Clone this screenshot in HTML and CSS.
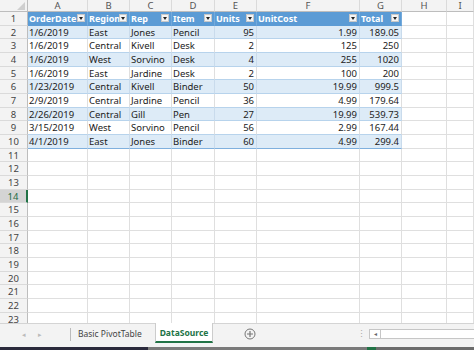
FILE: index.html
```html
<!DOCTYPE html>
<html>
<head>
<meta charset="utf-8">
<link rel="stylesheet" href="styles.css">
</head>
<body>
<div class="sheet">
  <div class="grid">
    <div class="corner"><span class="tri"></span></div>
    <div class="ch">A</div><div class="ch">B</div><div class="ch">C</div><div class="ch">D</div><div class="ch">E</div><div class="ch">F</div><div class="ch">G</div><div class="ch">H</div><div class="ch">I</div>

    <div class="rh">1</div>
    <div class="th"><span class="tt">OrderDate</span><span class="dd"></span></div>
    <div class="th"><span class="tt">Region</span><span class="dd"></span></div>
    <div class="th"><span class="tt">Rep</span><span class="dd"></span></div>
    <div class="th"><span class="tt">Item</span><span class="dd"></span></div>
    <div class="th"><span class="tt">Units</span><span class="dd"></span></div>
    <div class="th"><span class="tt">UnitCost</span><span class="dd"></span></div>
    <div class="th"><span class="tt">Total</span><span class="dd"></span></div>
    <div class="c"></div><div class="c"></div>

    <div class="rh">2</div><div class="c b">1/6/2019</div><div class="c b">East</div><div class="c b">Jones</div><div class="c b">Pencil</div><div class="c b n">95</div><div class="c b n">1.99</div><div class="c b n">189.05</div><div class="c"></div><div class="c"></div>
    <div class="rh">3</div><div class="c w">1/6/2019</div><div class="c w">Central</div><div class="c w">Kivell</div><div class="c w">Desk</div><div class="c w n">2</div><div class="c w n">125</div><div class="c w n">250</div><div class="c"></div><div class="c"></div>
    <div class="rh">4</div><div class="c b">1/6/2019</div><div class="c b">West</div><div class="c b">Sorvino</div><div class="c b">Desk</div><div class="c b n">4</div><div class="c b n">255</div><div class="c b n">1020</div><div class="c"></div><div class="c"></div>
    <div class="rh">5</div><div class="c w">1/6/2019</div><div class="c w">East</div><div class="c w">Jardine</div><div class="c w">Desk</div><div class="c w n">2</div><div class="c w n">100</div><div class="c w n">200</div><div class="c"></div><div class="c"></div>
    <div class="rh">6</div><div class="c b">1/23/2019</div><div class="c b">Central</div><div class="c b">Kivell</div><div class="c b">Binder</div><div class="c b n">50</div><div class="c b n">19.99</div><div class="c b n">999.5</div><div class="c"></div><div class="c"></div>
    <div class="rh">7</div><div class="c w">2/9/2019</div><div class="c w">Central</div><div class="c w">Jardine</div><div class="c w">Pencil</div><div class="c w n">36</div><div class="c w n">4.99</div><div class="c w n">179.64</div><div class="c"></div><div class="c"></div>
    <div class="rh">8</div><div class="c b">2/26/2019</div><div class="c b">Central</div><div class="c b">Gill</div><div class="c b">Pen</div><div class="c b n">27</div><div class="c b n">19.99</div><div class="c b n">539.73</div><div class="c"></div><div class="c"></div>
    <div class="rh">9</div><div class="c w">3/15/2019</div><div class="c w">West</div><div class="c w">Sorvino</div><div class="c w">Pencil</div><div class="c w n">56</div><div class="c w n">2.99</div><div class="c w n">167.44</div><div class="c"></div><div class="c"></div>
    <div class="rh">10</div><div class="c b last">4/1/2019</div><div class="c b last">East</div><div class="c b last">Jones</div><div class="c b last">Binder</div><div class="c b last n">60</div><div class="c b last n">4.99</div><div class="c b last n">299.4</div><div class="c"></div><div class="c"></div>

    <div class="rh">11</div><div class="c"></div><div class="c"></div><div class="c"></div><div class="c"></div><div class="c"></div><div class="c"></div><div class="c"></div><div class="c"></div><div class="c"></div>
    <div class="rh">12</div><div class="c"></div><div class="c"></div><div class="c"></div><div class="c"></div><div class="c"></div><div class="c"></div><div class="c"></div><div class="c"></div><div class="c"></div>
    <div class="rh">13</div><div class="c"></div><div class="c"></div><div class="c"></div><div class="c"></div><div class="c"></div><div class="c"></div><div class="c"></div><div class="c"></div><div class="c"></div>
    <div class="rh sel">14</div><div class="c"></div><div class="c"></div><div class="c"></div><div class="c"></div><div class="c"></div><div class="c"></div><div class="c"></div><div class="c"></div><div class="c"></div>
    <div class="rh">15</div><div class="c"></div><div class="c"></div><div class="c"></div><div class="c"></div><div class="c"></div><div class="c"></div><div class="c"></div><div class="c"></div><div class="c"></div>
    <div class="rh">16</div><div class="c"></div><div class="c"></div><div class="c"></div><div class="c"></div><div class="c"></div><div class="c"></div><div class="c"></div><div class="c"></div><div class="c"></div>
    <div class="rh">17</div><div class="c"></div><div class="c"></div><div class="c"></div><div class="c"></div><div class="c"></div><div class="c"></div><div class="c"></div><div class="c"></div><div class="c"></div>
    <div class="rh">18</div><div class="c"></div><div class="c"></div><div class="c"></div><div class="c"></div><div class="c"></div><div class="c"></div><div class="c"></div><div class="c"></div><div class="c"></div>
    <div class="rh">19</div><div class="c"></div><div class="c"></div><div class="c"></div><div class="c"></div><div class="c"></div><div class="c"></div><div class="c"></div><div class="c"></div><div class="c"></div>
    <div class="rh">20</div><div class="c"></div><div class="c"></div><div class="c"></div><div class="c"></div><div class="c"></div><div class="c"></div><div class="c"></div><div class="c"></div><div class="c"></div>
    <div class="rh">21</div><div class="c"></div><div class="c"></div><div class="c"></div><div class="c"></div><div class="c"></div><div class="c"></div><div class="c"></div><div class="c"></div><div class="c"></div>
    <div class="rh">22</div><div class="c"></div><div class="c"></div><div class="c"></div><div class="c"></div><div class="c"></div><div class="c"></div><div class="c"></div><div class="c"></div><div class="c"></div>
    <div class="rh">23</div><div class="c"></div><div class="c"></div><div class="c"></div><div class="c"></div><div class="c"></div><div class="c"></div><div class="c"></div><div class="c"></div><div class="c"></div>
  </div>
</div>
<div class="tabs">
  <div class="nav"><span class="arr">&#9666;</span><span class="arr">&#9656;</span></div>
  <div class="tab first">Basic PivotTable</div>
  <div class="tab active">DataSource</div>
  <div class="add">
    <svg width="12" height="12" viewBox="0 0 12 12"><circle cx="6" cy="6" r="5" fill="none" stroke="#777" stroke-width="1"/><path d="M6 3v6M3 6h6" stroke="#777" stroke-width="1.2"/></svg>
  </div>
  <div class="spacer"></div>
  <div class="dots">&#8942;</div>
  <div class="hscroll"><span class="hs-left">&#9666;</span></div>
</div>
<div class="taskbar">
  <div class="tb1"></div><div class="tb2"></div><div class="tb3"></div><div class="tb4"></div>
</div>
</body>
</html>
```
FILE: styles.css
```css
html, body {
  margin: 0;
  padding: 0;
  width: 474px;
  height: 350px;
  overflow: hidden;
  background: #fff;
  font-family: "Noto Sans", "Open Sans", sans-serif;
}
.sheet {
  height: 323px;
  overflow: hidden;
}
.grid {
  display: grid;
  grid-template-columns: 28px 60px 42px 42px 43px 42px 103px 42px 45px 27px;
  grid-template-rows: 12px repeat(23, 13.68px);
  font-size: 9.5px;
  color: #222;
}
.grid > div {
  box-sizing: border-box;
  overflow: hidden;
  white-space: nowrap;
}
.corner {
  background: #f3f3f3;
  border-right: 1px solid #bdbdbd;
  border-bottom: 1px solid #bdbdbd;
  position: relative;
}
.tri {
  position: absolute;
  right: 2px;
  bottom: 1px;
  width: 0;
  height: 0;
  border-left: 8px solid transparent;
  border-bottom: 8px solid #cfcfcf;
}
.ch {
  background: #f3f3f3;
  color: #555;
  text-align: center;
  line-height: 11px;
  font-size: 9.5px;
  border-right: 1px solid #dadada;
  border-bottom: 1px solid #bdbdbd;
}
.rh {
  background: #f3f3f3;
  color: #444;
  text-align: center;
  line-height: 13px;
  border-right: 1px solid #bdbdbd;
  border-bottom: 1px solid #dadada;
}
.rh.sel {
  background: #d4d4d4;
  color: #1f6b46;
  border-right: 2px solid #217346;
}
.c {
  border-right: 1px solid #dfdfdf;
  border-bottom: 1px solid #dfdfdf;
  line-height: 13px;
  padding: 0 2px 0 1px;
}
.c.b {
  background: #ddebf7;
  border-bottom-color: #b7d3ec;
  border-right-color: #c9dbec;
}
.c.w {
  background: #fff;
  border-bottom-color: #b7d3ec;
}
.c.last {
  border-bottom-color: #7fb0de;
}
.n {
  text-align: right;
}
.th {
  background: #5b9bd5;
  color: #fff;
  font-weight: bold;
  font-size: 9px;
  display: flex;
  align-items: center;
  border-right: 1px solid #74aadb;
  border-bottom: 1px solid #5b9bd5;
  padding: 0 2px 0 1px;
}
.tt {
  flex: 1;
  overflow: hidden;
  line-height: 13px;
}
.dd {
  flex: none;
  width: 8px;
  height: 8px;
  box-sizing: border-box;
  background: #f4f4f4;
  border: 1px solid #c8c8c8;
  position: relative;
}
.dd::after {
  content: "";
  position: absolute;
  left: 1px;
  top: 2px;
  border-left: 2.5px solid transparent;
  border-right: 2.5px solid transparent;
  border-top: 3px solid #222;
}
.tabs {
  height: 24px;
  background: #f3f3f3;
  border-top: 1px solid #d4d4d4;
  box-sizing: border-box;
  display: flex;
  align-items: stretch;
  font-size: 8.5px;
  color: #444;
}
.nav {
  width: 71px;
  display: flex;
  align-items: center;
  justify-content: center;
  gap: 12px;
  color: #bbb;
  font-size: 7px;
  border-right: 1px solid #bbb;
  margin: 4px 0 6px;
  padding-right: 6px;
  box-sizing: border-box;
}
.tab {
  display: flex;
  align-items: center;
  margin-bottom: 4px;
  box-sizing: border-box;
}
.tab.first {
  width: 84px;
  padding-left: 7px;
}
.tab.active {
  width: 58px;
  justify-content: center;
  background: #fff;
  color: #217346;
  font-weight: bold;
  border-bottom: 2px solid #217346;
  border-left: 1px solid #ccc;
  border-right: 1px solid #ccc;
  margin-top: -1px;
}
.add {
  width: 74px;
  display: flex;
  align-items: center;
  justify-content: center;
  margin-bottom: 4px;
}
.spacer { flex: 1; }
.dots {
  width: 16px;
  display: flex;
  align-items: center;
  justify-content: center;
  color: #aaa;
  font-size: 9px;
  margin-bottom: 4px;
}
.hscroll {
  width: 105px;
  height: 10px;
  margin-top: 5px;
  background: #fff;
  border: 1px solid #c6c6c6;
  border-right: none;
  box-sizing: border-box;
  display: flex;
}
.hs-left {
  width: 10px;
  border-right: 1px solid #c6c6c6;
  font-size: 6px;
  line-height: 8px;
  text-align: center;
  color: #666;
}
.taskbar {
  height: 3px;
  display: flex;
}
.tb1 { width: 148px; background: #2b2a3c; }
.tb2 { width: 219px; background: #7a7a7a; }
.tb3 { width: 9px; background: #217346; }
.tb4 { flex: 1; background: #6c6c6c; }
```
